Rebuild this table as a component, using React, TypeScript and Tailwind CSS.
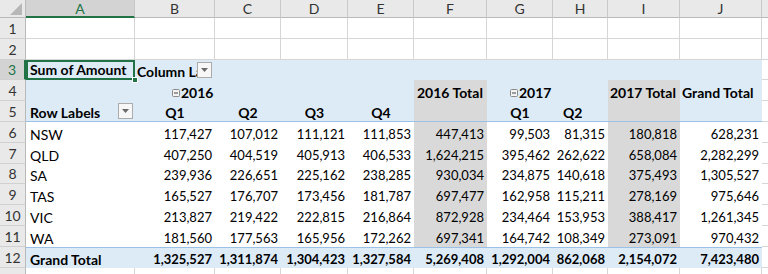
import React from "react";

const W = [
  "w-[26px]",
  "w-[109px]",
  "w-[80px]",
  "w-[66px]",
  "w-[67px]",
  "w-[66px]",
  "w-[73px]",
  "w-[66px]",
  "w-[55px]",
  "w-[72px]",
  "w-[82px]",
  "w-[6px]",
];

const LETTERS = ["A", "B", "C", "D", "E", "F", "G", "H", "I", "J"];

type RowData = { label: string; v: string[] };

const DATA: RowData[] = [
  { label: "NSW", v: ["117,427", "107,012", "111,121", "111,853", "447,413", "99,503", "81,315", "180,818", "628,231"] },
  { label: "QLD", v: ["407,250", "404,519", "405,913", "406,533", "1,624,215", "395,462", "262,622", "658,084", "2,282,299"] },
  { label: "SA", v: ["239,936", "226,651", "225,162", "238,285", "930,034", "234,875", "140,618", "375,493", "1,305,527"] },
  { label: "TAS", v: ["165,527", "176,707", "173,456", "181,787", "697,477", "162,958", "115,211", "278,169", "975,646"] },
  { label: "VIC", v: ["213,827", "219,422", "222,815", "216,864", "872,928", "234,464", "153,953", "388,417", "1,261,345"] },
  { label: "WA", v: ["181,560", "177,563", "165,956", "172,262", "697,341", "164,742", "108,349", "273,091", "970,432"] },
];

const TOTAL: RowData = {
  label: "Grand Total",
  v: ["1,325,527", "1,311,874", "1,304,423", "1,327,584", "5,269,408", "1,292,004", "862,068", "2,154,072", "7,423,480"],
};

const DATA_H = ["h-[21px]", "h-[21px]", "h-[20px]", "h-[21px]", "h-[21px]", "h-[21px]"];

function RowNum({ n, active = false }: { n: number; active?: boolean }) {
  return (
    <div
      className={`${W[0]} shrink-0 h-full flex items-center justify-center text-[14px] border-b border-b-[#d0d0d0] ${
        active
          ? "bg-[#d3d3d3] text-[#217346] border-r-2 border-r-[#217346]"
          : "bg-[#e9e9e9] text-[#333333] border-r border-r-[#b9b9b9]"
      }`}
    >
      {n}
    </div>
  );
}

function Grid({ w }: { w: string }) {
  return <div className={`${w} shrink-0 h-full bg-white border-r border-b border-[#d6d6d6]`} />;
}

function Extra() {
  return <div className={`${W[11]} shrink-0 h-full bg-white border-b border-[#d6d6d6]`} />;
}

function Dropdown() {
  return (
    <div className="w-[15px] h-[16px] bg-[#f7f7f7] border border-[#ababab] flex items-center justify-center">
      <svg width="7" height="4" viewBox="0 0 7 4">
        <path d="M0 0 L7 0 L3.5 4 Z" fill="#6a6a6a" />
      </svg>
    </div>
  );
}

function Collapse() {
  return (
    <svg width="8" height="8" viewBox="0 0 8 8" className="mr-[1px] mb-[4px] shrink-0">
      <rect x="0.5" y="0.5" width="7" height="7" rx="1" fill="#f3f3f3" stroke="#8a8a8a" />
      <path d="M2 4 H6" stroke="#444444" strokeWidth="1" />
    </svg>
  );
}

function HeaderRow() {
  return (
    <div className="flex h-[18px]">
      <div className={`${W[0]} shrink-0 h-full bg-[#e9e9e9] border-r border-b border-[#b9b9b9] relative`}>
        <svg width="26" height="18" viewBox="0 0 26 18" className="absolute inset-0">
          <path d="M22 3 L22 15 L10 15 Z" fill="#b7b7b7" />
        </svg>
      </div>
      {LETTERS.map((l, i) => (
        <div
          key={l}
          className={`${W[i + 1]} shrink-0 h-full flex items-center justify-center text-[14px] border-r border-r-[#c9c9c9] ${
            i === 0
              ? "bg-[#d3d3d3] text-[#217346] border-b-2 border-b-[#217346]"
              : "bg-[#e9e9e9] text-[#333333] border-b border-b-[#b9b9b9]"
          }`}
        >
          {l}
        </div>
      ))}
      <div className={`${W[11]} shrink-0 h-full bg-[#e9e9e9] border-b border-[#b9b9b9]`} />
    </div>
  );
}

function EmptyRow({ n, h }: { n: number; h: string }) {
  return (
    <div className={`flex ${h}`}>
      <RowNum n={n} />
      {LETTERS.map((l, i) => (
        <Grid key={l} w={W[i + 1]} />
      ))}
      <Extra />
    </div>
  );
}

const BLUE = "bg-[#ddebf7]";
const GRAY = "bg-[#d9d9d9]";

function Cell({
  w,
  className = "",
  children,
}: {
  w: string;
  className?: string;
  children?: React.ReactNode;
}) {
  return (
    <div className={`${w} shrink-0 h-full flex items-end whitespace-nowrap overflow-hidden leading-[17px] ${className}`}>
      {children}
    </div>
  );
}

export default function App() {
  return (
    <div className="w-[768px] h-[274px] overflow-hidden bg-white font-['Lato',sans-serif] text-[13px] text-black">
      <HeaderRow />
      <EmptyRow n={1} h="h-[21px]" />
      <EmptyRow n={2} h="h-[21px]" />

      {/* Row 3 */}
      <div className="flex h-[20px]">
        <RowNum n={3} active />
        <div className={`${W[1]} shrink-0 h-full relative ${BLUE}`}>
          <div className="absolute inset-0 border-2 border-[#217346] flex items-end pl-[2px] text-[14px] font-bold leading-[17px] whitespace-nowrap">
            Sum of Amount
          </div>
          <div className="absolute right-[-3px] bottom-[-3px] w-[6px] h-[6px] bg-[#217346] border border-white z-10" />
        </div>
        <div className={`${W[2]} shrink-0 h-full relative ${BLUE}`}>
          <div className="h-full w-[62px] flex items-end pl-[2px] text-[14px] font-bold leading-[17px] whitespace-nowrap overflow-hidden">
            Column Labels
          </div>
          <div className="absolute right-[3px] top-[2px]">
            <Dropdown />
          </div>
        </div>
        {[3, 4, 5, 6, 7, 8, 9, 10].map((i) => (
          <Cell key={i} w={W[i]} className={BLUE} />
        ))}
        <Extra />
      </div>

      {/* Row 4 */}
      <div className="flex h-[21px]">
        <RowNum n={4} />
        <Cell w={W[1]} className={BLUE} />
        <Cell w={W[2]} className={`${BLUE} pl-[37px] font-bold text-[14px]`}>
          <Collapse />
          2016
        </Cell>
        <Cell w={W[3]} className={BLUE} />
        <Cell w={W[4]} className={BLUE} />
        <Cell w={W[5]} className={BLUE} />
        <Cell w={W[6]} className={`${GRAY} pl-[3px] font-bold text-[14px]`}>2016 Total</Cell>
        <Cell w={W[7]} className={`${BLUE} pl-[23px] font-bold text-[14px]`}>
          <Collapse />
          2017
        </Cell>
        <Cell w={W[8]} className={BLUE} />
        <Cell w={W[9]} className={`${GRAY} pl-[2px] font-bold text-[14px]`}>2017 Total</Cell>
        <Cell w={W[10]} className={`${BLUE} pl-[2px] font-bold text-[14px]`}>Grand Total</Cell>
        <Extra />
      </div>

      {/* Row 5 */}
      <div className="flex h-[21px]">
        <RowNum n={5} />
        <div className={`${W[1]} shrink-0 h-full relative ${BLUE} border-b border-[#9bc2e6]`}>
          <div className="h-full flex items-end pl-[4px] text-[14px] font-bold leading-[17px] whitespace-nowrap">Row Labels</div>
          <div className="absolute right-[2px] top-[2px]">
            <Dropdown />
          </div>
        </div>
        {["Q1", "Q2", "Q3", "Q4"].map((q, i) => (
          <Cell key={q} w={W[i + 2]} className={`${BLUE} justify-center font-bold text-[14px] border-b border-[#9bc2e6]`}>
            {q}
          </Cell>
        ))}
        <Cell w={W[6]} className={`${GRAY} border-b border-[#9bc2e6]`} />
        <Cell w={W[7]} className={`${BLUE} justify-center font-bold text-[14px] border-b border-[#9bc2e6]`}>Q1</Cell>
        <Cell w={W[8]} className={`${BLUE} pl-[10px] font-bold text-[14px] border-b border-[#9bc2e6]`}>Q2</Cell>
        <Cell w={W[9]} className={`${GRAY} border-b border-[#9bc2e6]`} />
        <Cell w={W[10]} className={`${BLUE} border-b border-[#9bc2e6]`} />
        <Extra />
      </div>

      {/* Data rows 6-11 */}
      {DATA.map((r, ri) => (
        <div key={r.label} className={`flex ${DATA_H[ri]}`}>
          <RowNum n={6 + ri} />
          <Cell w={W[1]} className="bg-white pl-[4px] text-[14px]">{r.label}</Cell>
          {r.v.map((val, i) => (
            <Cell
              key={i}
              w={W[i + 2]}
              className={`justify-end pr-[3px] ${i === 4 || i === 7 ? GRAY : "bg-white"}`}
            >
              {val}
            </Cell>
          ))}
          <Extra />
        </div>
      ))}

      {/* Row 12 */}
      <div className="flex h-[21px]">
        <RowNum n={12} />
        <Cell w={W[1]} className={`${BLUE} pl-[4px] font-bold text-[14px] border-t border-[#9bc2e6]`}>
          {TOTAL.label}
        </Cell>
        {TOTAL.v.map((val, i) => (
          <Cell key={i} w={W[i + 2]} className={`${BLUE} justify-end pr-[3px] font-bold border-t border-[#9bc2e6]`}>
            {val}
          </Cell>
        ))}
        <Extra />
      </div>

      {/* Row 13 partial */}
      <div className="flex h-[6px]">
        <div className={`${W[0]} shrink-0 h-full bg-[#e9e9e9] border-r border-[#b9b9b9]`} />
        {LETTERS.map((l, i) => (
          <div key={l} className={`${W[i + 1]} shrink-0 h-full bg-white border-r border-[#d6d6d6]`} />
        ))}
        <div className={`${W[11]} shrink-0 h-full bg-white`} />
      </div>
    </div>
  );
}
